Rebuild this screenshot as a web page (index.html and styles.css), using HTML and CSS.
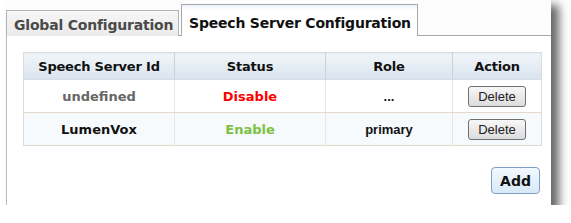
FILE: index.html
```html
<!DOCTYPE html>
<html lang="en">
<head>
    <meta charset="UTF-8">
    <title>Speech Server Configuration</title>
    <link rel="stylesheet" href="styles.css">
</head>
<body>
    <div class="window">
        <div class="tabs">
            <div class="tab">Global Configuration</div>
            <div class="tab active">Speech Server Configuration</div>
        </div>
        <div class="tab-body">
            <table class="servers">
                <thead>
                    <tr>
                        <th class="col-id">Speech Server Id</th>
                        <th class="col-status">Status</th>
                        <th class="col-role">Role</th>
                        <th class="col-action">Action</th>
                    </tr>
                </thead>
                <tbody>
                    <tr>
                        <td class="server-id muted">undefined</td>
                        <td class="status disable">Disable</td>
                        <td class="role">...</td>
                        <td><button class="delete-btn">Delete</button></td>
                    </tr>
                    <tr class="alt">
                        <td class="server-id">LumenVox</td>
                        <td class="status enable">Enable</td>
                        <td class="role">primary</td>
                        <td><button class="delete-btn">Delete</button></td>
                    </tr>
                </tbody>
            </table>
            <div class="actions">
                <button class="add-btn">Add</button>
            </div>
        </div>
    </div>
</body>
</html>
```

FILE: styles.css
```css
body {
    margin: 0;
    background: #ffffff;
    font-family: 'DejaVu Sans', sans-serif;
}

.window {
    width: 545px;
    height: 208px;
    margin-left: 6px;
    margin-top: -3px;
    background: #fcfcfc;
    box-shadow: 8px 8px 9px rgba(0, 0, 0, 0.6);
}

.tabs {
    display: flex;
    align-items: flex-end;
    gap: 2px;
    height: 39px;
    margin-bottom: -1px;
}

.tab {
    box-sizing: border-box;
    flex: none;
    height: 26px;
    padding: 6px 0 0 7px;
    width: 173px;
    border: 1px solid #b4b4b4;
    border-bottom: none;
    background: linear-gradient(#f6f6f6, #ebebeb);
    color: #4a4a4a;
    font-size: 14px;
    font-weight: bold;
    letter-spacing: -0.2px;
    white-space: nowrap;
}

.tab.active {
    position: relative;
    height: 32px;
    width: 237px;
    padding: 10px 0 0 7px;
    background: linear-gradient(#eef3fa, #ffffff 6px);
    border-color: #a8a8a8;
    color: #111;
    z-index: 1;
}

.tab-body {
    height: 168px;
    background: #ffffff;
    border-left: 1px solid #b3bccb;
    border-top: 1px solid #a8a8a8;
    padding: 16px 9px 0 16px;
}

.servers {
    width: 519px;
    border-collapse: collapse;
    border: 1px solid #dcdcdc;
}

.servers th {
    height: 26px;
    padding: 0;
    background: linear-gradient(#f1f5f9, #d9e4ee);
    border-right: 1px solid #c8d2dc;
    border-bottom: 1px solid #d6dde4;
    font-size: 13px;
    font-weight: bold;
    color: #111;
    letter-spacing: -0.2px;
}

.servers th:last-child {
    border-right: none;
}

.col-id { width: 150px; }
.col-status { width: 150px; }
.col-role { width: 126px; }

.servers td {
    height: 32px;
    padding: 0;
    text-align: center;
    border-right: 1px solid #ebe5dc;
    border-bottom: 1px solid #e3d9cc;
    font-size: 13px;
    font-weight: bold;
    color: #111;
}

.servers td:last-child {
    border-right: none;
}

.servers tr.alt td {
    background: #f6fafd;
}

.muted {
    color: #666666 !important;
}

.disable {
    color: #ff0000 !important;
}

.enable {
    color: #7cc142 !important;
}

.role {
    font-family: 'Liberation Sans', Arial, sans-serif;
}

.delete-btn {
    width: 58px;
    height: 21px;
    padding: 0;
    font-family: 'Liberation Sans', Arial, sans-serif;
    font-size: 13px;
    color: #222;
    background: linear-gradient(#f7f7f7, #dcdcdc);
    border: 1px solid #707070;
    border-radius: 3px;
}

.actions {
    display: flex;
    justify-content: flex-end;
    padding: 21px 2px 0 0;
}

.add-btn {
    width: 49px;
    height: 27px;
    padding: 0;
    font-family: 'DejaVu Sans', sans-serif;
    font-size: 14px;
    font-weight: bold;
    color: #111;
    background: linear-gradient(#f2f8fe, #d8e8f8);
    border: 1px solid #7f9fc6;
    border-radius: 4px;
}
```
